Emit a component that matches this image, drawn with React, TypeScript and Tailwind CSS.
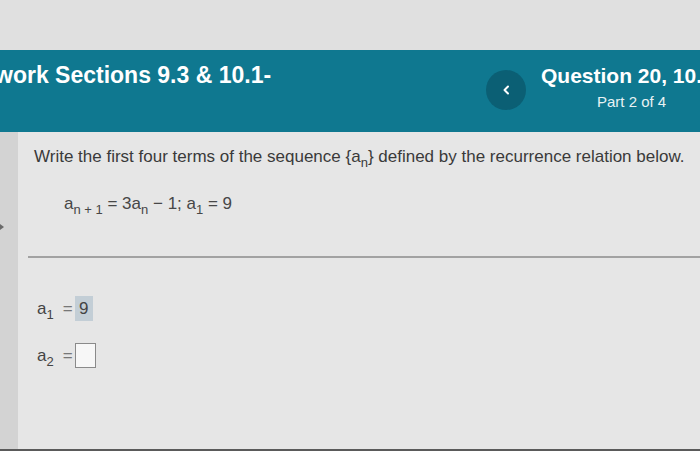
const Sub = ({ children }: { children: React.ReactNode }) => (
  <span className="relative top-[5px] text-[13px]">{children}</span>
);

export default function App() {
  return (
    <div className="flex h-[451px] w-[700px] flex-col overflow-hidden bg-[#e2e2e2] font-['Liberation_Sans',Arial,sans-serif]">
      {/* top strip of the monitor */}
      <div className="h-[50px] shrink-0 bg-[#e0e0e0]" />

      {/* header bar */}
      <header className="flex h-[82px] shrink-0 items-start bg-[#0f7890] text-white">
        <h1 className="ml-[-5px] mt-[11px] whitespace-nowrap text-[23px] font-bold leading-[28px]">
          work Sections 9.3 &amp; 10.1-
        </h1>
        <div className="ml-auto flex w-[214px] shrink-0 items-start">
          <button
            type="button"
            className="mt-[20px] flex h-10 w-10 shrink-0 items-center justify-center rounded-full bg-[#0b5f74]"
          >
            <svg width="8" height="10" viewBox="0 0 8 10" fill="none">
              <polyline
                points="6,1.5 2.5,5 6,8.5"
                stroke="white"
                strokeWidth="2"
                strokeLinecap="round"
                strokeLinejoin="round"
              />
            </svg>
          </button>
          <div className="ml-[15px] mt-[13px] whitespace-nowrap">
            <div className="text-[21px] font-bold leading-[26px]">Question 20, 10.1.</div>
            <div className="mt-[4px] pl-[56px] text-[15px] leading-[18px] text-[#e8f2f4]">
              Part 2 of 4
            </div>
          </div>
        </div>
      </header>

      {/* content */}
      <div className="flex flex-1 border-b-2 border-[#5a5a5a]">
        <div className="relative w-[18px] shrink-0 bg-[#d3d3d3]">
          <span className="absolute left-0 top-[92px] h-0 w-0 border-y-[3px] border-l-[4px] border-y-transparent border-l-[#6a6a6a]" />
        </div>
        <div className="flex-1 bg-[#e6e6e6] text-[#3a3a3a]">
          <p className="pl-[16px] pt-[15px] text-[17px] leading-[19px]">
            Write the first four terms of the sequence {"{"}a<Sub>n</Sub>
            {"}"} defined by the recurrence relation below.
          </p>
          <div className="mt-[27px] pl-[46px] text-[17px] leading-[20px] text-[#474747]">
            a<Sub>n + 1</Sub> = 3a<Sub>n</Sub> − 1; a<Sub>1</Sub> = 9
          </div>

          <div className="ml-[10px] mt-[41px] h-[2px] bg-[#a2a2a2]" />

          <div className="mt-[38px] flex h-[25px] items-center pl-[19px] text-[17px] text-[#444]">
            <span>
              a<Sub>1</Sub>
            </span>
            <span className="ml-[9px] text-[#777]">=</span>
            <span className="ml-[2px] flex h-[25px] w-[18px] items-center justify-center bg-[#c3ced6]">
              9
            </span>
          </div>
          <div className="mt-[22px] flex h-[25px] items-center pl-[19px] text-[17px] text-[#444]">
            <span>
              a<Sub>2</Sub>
            </span>
            <span className="ml-[9px] text-[#777]">=</span>
            <span className="ml-[2px] h-[25px] w-[21px] border border-[#8a8a8a] bg-[#f7f7f7]" />
          </div>
        </div>
      </div>
    </div>
  );
}
